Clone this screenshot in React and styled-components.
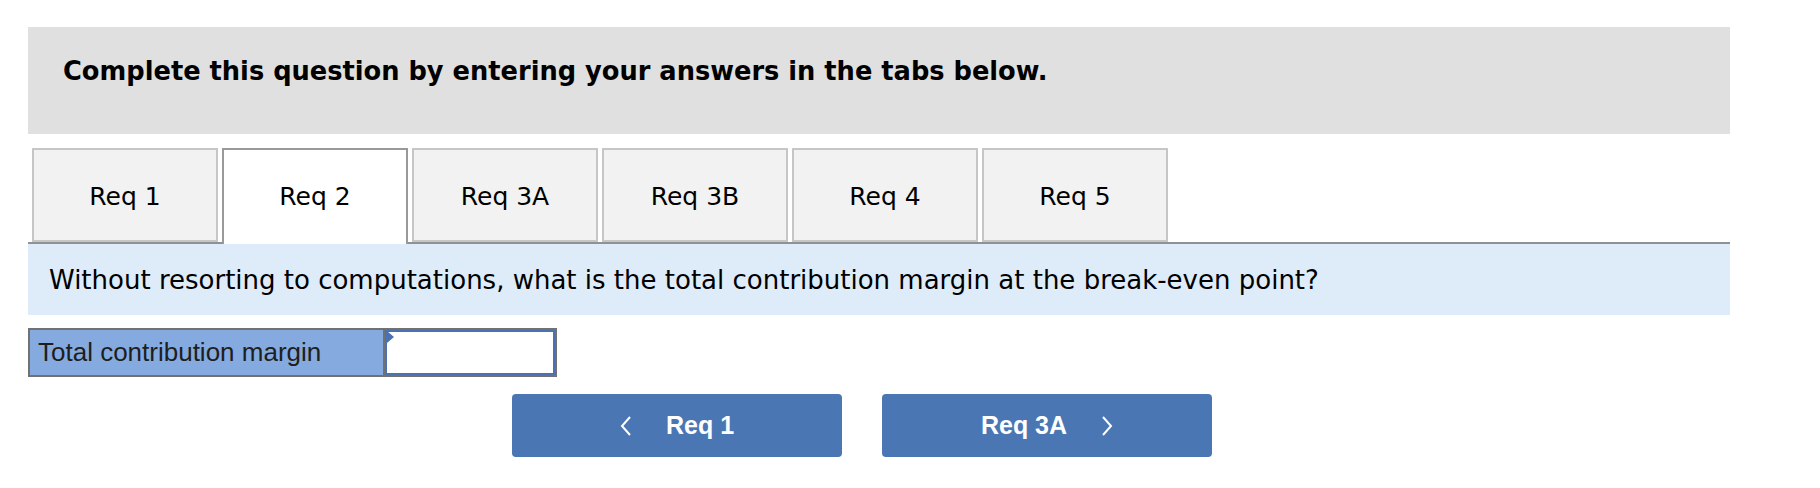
import React from 'react'
import styled, { createGlobalStyle } from 'styled-components'

const tabs = ['Req 1', 'Req 2', 'Req 3A', 'Req 3B', 'Req 4', 'Req 5']

const App = () => {
  return (
    <>
      <Global />
      <Page>
        <Intro>
          <h2>Complete this question by entering your answers in the tabs below.</h2>
        </Intro>
        <TabStrip>
          {tabs.map((t) => (
            <Tab key={t} active={t === 'Req 2'}>{t}</Tab>
          ))}
        </TabStrip>
        <Question>
          Without resorting to computations, what is the total contribution margin at the break-even point?
        </Question>
        <AnswerRow>
          <Label>Total contribution margin</Label>
          <InputCell>
            <input type="text" />
          </InputCell>
        </AnswerRow>
        <Nav>
          <NavButton>
            <Chevron viewBox="0 0 12 22">
              <polyline points="10,2 2,11 10,20" />
            </Chevron>
            <span>Req 1</span>
          </NavButton>
          <NavButton>
            <span>Req 3A</span>
            <Chevron viewBox="0 0 12 22">
              <polyline points="2,2 10,11 2,20" />
            </Chevron>
          </NavButton>
        </Nav>
      </Page>
    </>
  )
}

const Global = createGlobalStyle`
  body {
    margin: 0;
    background: #fff;
    font-family: "DejaVu Sans", Verdana, sans-serif;
  }
`;

const Page = styled.div`
  width: 1702px;
  padding: 27px 0 0 28px;
`;

const Intro = styled.div`
  height: 107px;
  background-color: #e0e0e0;
  padding: 29px 0 0 35px;
  box-sizing: border-box;

  h2 {
    margin: 0;
    font-size: 25.7px;
    line-height: 30px;
    font-weight: 700;
    color: #000;
  }
`;

const TabStrip = styled.div`
  display: flex;
  gap: 4px;
  margin-top: 14px;
  padding-left: 4px;
  border-bottom: 2px solid #8f9194;
  height: 94px;
`;

const Tab = styled.div`
  width: 186px;
  height: ${(p) => (p.active ? '96px' : '94px')};
  box-sizing: border-box;
  border: 2px solid ${(p) => (p.active ? '#999' : '#c6c6c6')};
  border-bottom: ${(p) => (p.active ? 'none' : '2px solid #c6c6c6')};
  background-color: ${(p) => (p.active ? '#fff' : '#f2f2f2')};
  display: flex;
  align-items: center;
  justify-content: center;
  padding-top: 3px;
  padding-bottom: ${(p) => (p.active ? '4px' : '0')};
  font-size: 25px;
  color: #000;
  position: relative;
  z-index: 1;
`;

const Question = styled.div`
  height: 71px;
  background-color: #deebf8;
  display: flex;
  align-items: center;
  padding-left: 21px;
  font-size: 26px;
  color: #000;
`;

const AnswerRow = styled.div`
  display: flex;
  width: 529px;
  height: 49px;
  margin-top: 13px;
  border: 2px solid #717171;
  box-sizing: border-box;
`;

const Label = styled.div`
  width: 355px;
  background-color: #84aadf;
  border-right: 2px solid #717171;
  display: flex;
  align-items: center;
  padding-left: 8px;
  box-sizing: border-box;
  font-family: "Liberation Sans", Arial, sans-serif;
  font-size: 26px;
  color: #1e1e1e;
`;

const InputCell = styled.div`
  flex: 1;
  position: relative;
  border: 2px solid #4a72b2;

  &::before {
    content: '';
    position: absolute;
    left: 0;
    top: 0;
    border-top: 6px solid transparent;
    border-bottom: 6px solid transparent;
    border-left: 7px solid #4a72b2;
    transform: translateY(-1px);
  }

  input {
    width: 100%;
    height: 100%;
    border: 0;
    outline: 0;
    padding: 0 8px;
    box-sizing: border-box;
    background: #fff;
  }
`;

const Nav = styled.div`
  display: flex;
  gap: 40px;
  margin-top: 17px;
  padding-left: 484px;
`;

const NavButton = styled.button`
  width: 330px;
  height: 63px;
  border: 0;
  border-radius: 4px;
  background-color: #4a76b4;
  color: #fff;
  display: flex;
  align-items: center;
  justify-content: center;
  gap: 34px;
  font-family: "Liberation Sans", Arial, sans-serif;
  font-size: 25px;
  font-weight: 700;
  cursor: pointer;
`;

const Chevron = styled.svg`
  width: 12px;
  height: 22px;
  fill: none;
  stroke: #fff;
  stroke-width: 2;
`;

export default App
